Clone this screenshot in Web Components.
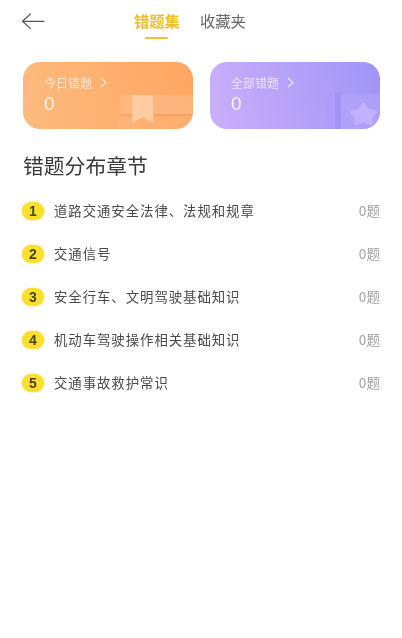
<!DOCTYPE html>
<html lang="zh-CN">
<head>
<meta charset="UTF-8">
<title>错题集</title>
<style>
  html, body { margin: 0; height: 100%; background: #fff; }
  body { font-family: "Noto Sans CJK SC", "Liberation Sans", sans-serif; }
</style>
</head>
<body>
<wrong-page></wrong-page>

<template id="tab-bar-tpl">
  <style>
    :host { display: flex; height: 62px; box-sizing: border-box; padding: 13px 0 0 21px; }
    svg { display: block; width: 24px; height: 17px; flex: none; }
    .tabs { display: flex; gap: 20px; margin: -2px 0 0 89px; }
    .tab { font-size: 15.3px; line-height: 18px; color: #66676a; }
    .tab.on { color: #f0c02a; font-weight: 700; }
    .tab.on::after { content: ""; display: block; width: 23px; height: 2px; border-radius: 1px; background: #efc22e; margin: 8px auto 0; }
  </style>
  <svg viewBox="0 0 24 17" fill="none" stroke="#55555a" stroke-width="1.2" stroke-linecap="round" stroke-linejoin="round">
    <path d="M9.5 1 1.5 8.3 9.5 15.6M1.5 8.3H23"/>
  </svg>
  <div class="tabs">
    <div class="tab on">错题集</div>
    <div class="tab">收藏夹</div>
  </div>
</template>

<template id="stat-card-tpl">
  <style>
    :host { display: block; position: relative; height: 67px; border-radius: 17px; overflow: hidden; color: #fff; box-sizing: border-box; padding: 13px 0 0 21px; }
    :host([tone="orange"]) { background: linear-gradient(75deg, #fdbb7f 0%, #ffa561 100%); }
    :host([tone="purple"]) { background: linear-gradient(75deg, #cbaffb 0%, #9f94f7 100%); }
    .label { display: flex; align-items: center; gap: 8px; font-size: 12px; line-height: 15px; }
    .text { opacity: .7; }
    .label svg { width: 7px; height: 11px; opacity: .75; }
    .num { font-family: "Liberation Sans", sans-serif; font-size: 19px; line-height: 22px; margin-top: 3px; opacity: .85; }
    .art { position: absolute; right: 0; bottom: 0; width: 90px; height: 37px; }
  </style>
  <div class="label"><span class="text"><slot></slot></span>
    <svg viewBox="0 0 7 11" fill="none" stroke="#fff" stroke-width="1.1"><path d="M1 1l5 4.5L1 10"/></svg>
  </div>
  <div class="num"><slot name="num"></slot></div>
  <svg class="art" viewBox="0 0 90 37" id="art"></svg>
</template>

<template id="section-row-tpl">
  <style>
    :host { display: flex; align-items: center; height: 43px; }
    .badge { flex: none; width: 22px; height: 18px; margin-top: 2px; border-radius: 9px; background: #fae02c; box-shadow: 0 0 2px #f3d437;
      font: 700 14px/19px "Liberation Sans", sans-serif; color: #4b4326; text-align: center; }
    .name { flex: 1; margin-left: 10px; font-size: 13.4px; letter-spacing: .95px; color: #4a4a4d; white-space: nowrap; }
    .count { font-size: 13.6px; margin-top: 1px; color: #a2a2a4; }
  </style>
  <div class="badge"></div>
  <div class="name"><slot></slot></div>
  <div class="count"></div>
</template>

<template id="wrong-page-tpl">
  <style>
    :host { display: block; width: 402px; height: 638px; background: #fff; overflow: hidden; box-sizing: border-box; filter: blur(.35px); }
    .cards { display: grid; grid-template-columns: 170px 170px; gap: 17px; padding: 0 22px 0 23px; }
    h2 { margin: 22px 0 0 23px; font-size: 20.8px; line-height: 28px; font-weight: 400; color: #3a3a3d; }
    .rows { padding: 0 22px; margin-top: 9px; }
  </style>
  <tab-bar></tab-bar>
  <div class="cards">
    <stat-card tone="orange">今日错题<span slot="num">0</span></stat-card>
    <stat-card tone="purple">全部错题<span slot="num">0</span></stat-card>
  </div>
  <h2>错题分布章节</h2>
  <div class="rows">
    <section-row index="1" count="0题">道路交通安全法律、法规和规章</section-row>
    <section-row index="2" count="0题">交通信号</section-row>
    <section-row index="3" count="0题">安全行车、文明驾驶基础知识</section-row>
    <section-row index="4" count="0题">机动车驾驶操作相关基础知识</section-row>
    <section-row index="5" count="0题">交通事故救护常识</section-row>
  </div>
</template>

<script>
  function stamp(el, id) {
    const root = el.attachShadow({mode: 'open'});
    root.appendChild(document.getElementById(id).content.cloneNode(true));
    return root;
  }

  const ART = {
    orange: `
      <rect x="14" y="25" width="76" height="12" rx="5" fill="#ffc08f" opacity=".25"/>
      <rect x="17" y="3" width="73" height="19" fill="#ffc79c" opacity=".4"/>
      <rect x="17" y="22" width="73" height="1.500" fill="#f59a58" opacity=".6"/>
      <path d="M29 3H50V31L39.500 25 29 31Z" fill="#ffcba2"/>`,
    purple: `
      <path d="M20 12h9a5 5 0 0 1 0 10h-4M25 22h4a5.500 5.500 0 0 1 0 11h-9" fill="none" stroke="#b4a0f6" stroke-width="2"/>
      <rect x="45" y="0" width="6" height="37" fill="#9486ee" opacity=".4"/>
      <rect x="51" y="2" width="39" height="35" fill="#b7a8fa" opacity=".55"/>
      <path d="M73.500 12l4 6 8 2-5 6 .5 5.500-7.500-2.500-7.500 2.500.5-5.500-5-6 8-2Z" fill="#c2b1fc" stroke="#c2b1fc" stroke-width="3" stroke-linejoin="round"/>`
  };

  class TabBar extends HTMLElement {
    constructor() { super(); stamp(this, 'tab-bar-tpl'); }
  }

  class StatCard extends HTMLElement {
    constructor() { super(); stamp(this, 'stat-card-tpl'); }
    connectedCallback() {
      this.shadowRoot.getElementById('art').innerHTML = ART[this.getAttribute('tone')];
    }
  }

  class SectionRow extends HTMLElement {
    constructor() { super(); stamp(this, 'section-row-tpl'); }
    connectedCallback() {
      this.shadowRoot.querySelector('.badge').textContent = this.getAttribute('index');
      this.shadowRoot.querySelector('.count').textContent = this.getAttribute('count');
    }
  }

  class WrongPage extends HTMLElement {
    constructor() { super(); stamp(this, 'wrong-page-tpl'); }
  }

  customElements.define('tab-bar', TabBar);
  customElements.define('stat-card', StatCard);
  customElements.define('section-row', SectionRow);
  customElements.define('wrong-page', WrongPage);
</script>
</body>
</html>
